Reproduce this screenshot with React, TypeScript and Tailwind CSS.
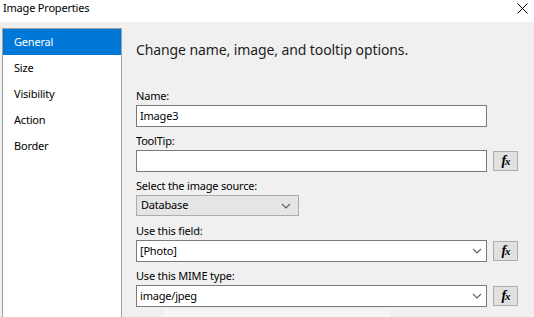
import { ReactNode } from "react";

const font = { fontFamily: '"Noto Sans", "Open Sans", sans-serif' };

const Chevron = () => (
  <svg width="10" height="6" viewBox="0 0 10 6" className="text-[#606060]">
    <path d="M1 1 L5 5 L9 1" fill="none" stroke="currentColor" strokeWidth="1.1" />
  </svg>
);

const FxButton = () => (
  <button className="ml-[6px] flex h-[20px] w-[25px] items-center justify-center border border-[#adadad] bg-[#e1e1e1] text-black">
    <span className="font-['Liberation_Serif'] text-[14px] font-bold italic leading-none tracking-[-1px]">
      f<span className="text-[11px]">x</span>
    </span>
  </button>
);

const Label = ({ children, className }: { children: ReactNode; className: string }) => (
  <div className={"h-[16px] text-[11px] leading-[16px] tracking-[-0.2px] text-black " + className}>
    {children}
  </div>
);

const TextBox = ({ value, combo }: { value?: string; combo?: boolean }) => (
  <div className="flex h-[22px] w-[351px] items-center justify-between border border-[#7a7a7a] bg-white pl-[3px] pr-[4px] text-[11px] tracking-[-0.2px] text-black">
    <span>{value}</span>
    {combo && <Chevron />}
  </div>
);

const navItems = ["General", "Size", "Visibility", "Action", "Border"];

const App = () => {
  return (
    <div style={font} className="flex h-[317px] w-[534px] flex-col overflow-hidden bg-[#f0f0f0]">
      <div className="flex h-[22px] shrink-0 items-start justify-between bg-white pl-[3px] pr-[5px]">
        <span className="text-[11px] leading-[16px] tracking-[-0.2px] text-black">Image Properties</span>
        <svg width="11" height="11" viewBox="0 0 11 11" className="mt-[3px] mr-[1px]">
          <path d="M0.5 0.5 L10.5 10.5 M10.5 0.5 L0.5 10.5" stroke="#000" strokeWidth="1" />
        </svg>
      </div>

      <div className="flex flex-1 pl-[2px] pt-[6px]">
        <div className="w-[120px] shrink-0 border border-b-0 border-[#a0a0a0] bg-white">
          {navItems.map((item, i) => (
            <div
              key={item}
              className={
                "flex h-[26px] items-center pl-[11px] text-[11px] tracking-[-0.2px] " +
                (i === 0 ? "bg-[#0078d7] text-white" : "text-black")
              }
            >
              {item}
            </div>
          ))}
        </div>

        <div className="flex-1 pl-[14px]">
          <div className="mt-[12px] text-[14px] leading-[20px] tracking-[-0.1px] text-[#1e1e1e]">
            Change name, image, and tooltip options.
          </div>

          <Label className="mt-[28px]">Name:</Label>
          <div className="mt-[1px]">
            <TextBox value="Image3" />
          </div>

          <Label className="mt-[6px]">ToolTip:</Label>
          <div className="mt-[1px] flex items-center">
            <TextBox />
            <FxButton />
          </div>

          <Label className="mt-[6px]">Select the image source:</Label>
          <div className="mt-[1px] flex h-[21px] w-[163px] items-center justify-between border border-[#acacac] bg-[#e5e5e5] pl-[4px] pr-[7px] text-[11px] tracking-[-0.2px] text-black">
            <span>Database</span>
            <Chevron />
          </div>

          <Label className="mt-[7px]">Use this field:</Label>
          <div className="mt-[1px] flex items-center">
            <TextBox value="[Photo]" combo />
            <FxButton />
          </div>

          <Label className="mt-[6px]">Use this MIME type:</Label>
          <div className="mt-[1px] flex items-center">
            <TextBox value="image/jpeg" combo />
            <FxButton />
          </div>

          <div className="ml-[27px] mt-[2px] h-[12px] w-[227px] bg-[#f5f5f5]" />
        </div>
      </div>
    </div>
  );
};

export default App;
